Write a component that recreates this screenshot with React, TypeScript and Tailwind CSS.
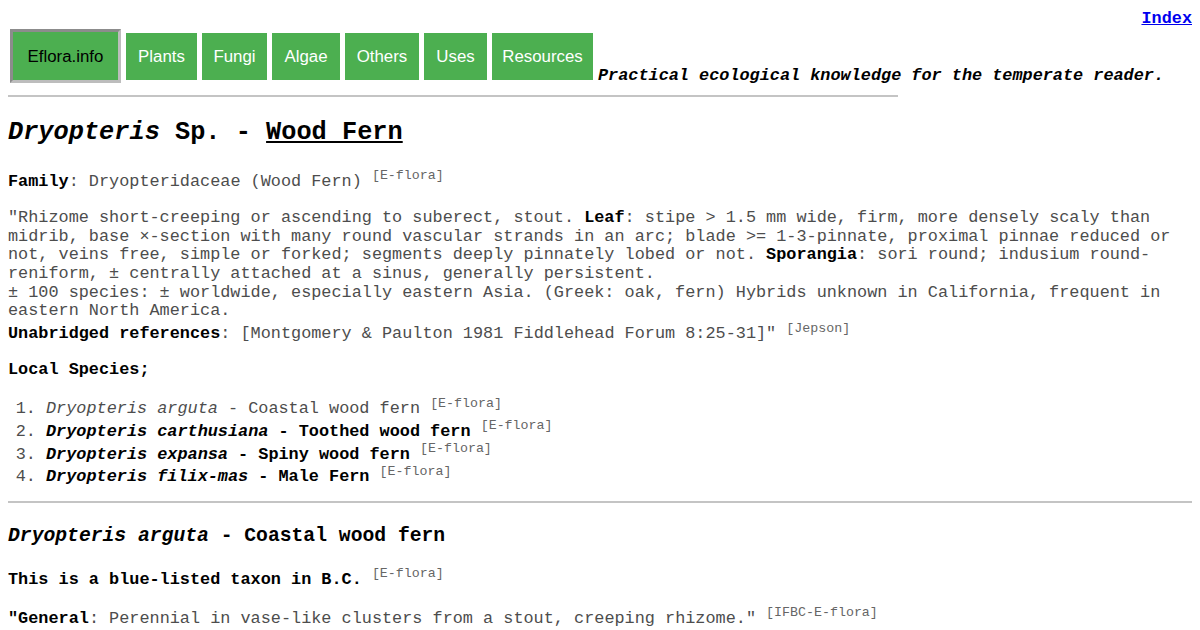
import React from "react";

const Sup = ({ children }: { children: React.ReactNode }) => (
  <sup className="text-[13.3px] font-normal not-italic text-[#666]">{children}</sup>
);

export default function App() {
  const navs: [string, string][] = [
    ["Plants", "w-[71px]"],
    ["Fungi", "w-[65px]"],
    ["Algae", "w-[68px]"],
    ["Others", "w-[74px]"],
    ["Uses", "w-[63px]"],
    ["Resources", "w-[101px]"],
  ];
  return (
    <div className="min-h-[630px] bg-white px-[8px] pb-[8px] pt-[10px] font-['Liberation_Mono','Courier_New',monospace] text-[16.85px] leading-[18.7px] text-[#4d4d4d]">
      <div className="text-right">
        <a href="#" className="font-bold text-[#0000ee] underline">Index</a>
      </div>

      <div className="flex h-[54px] items-start">
        <div className="ml-[2px] flex h-[54px] w-[111px] items-center justify-center border-[3px] border-[#8c8c8c] border-b-[#bdbdbd] border-r-[#bdbdbd] bg-[#4caf50] pt-[3px] font-['Liberation_Sans',Arial,sans-serif] text-[16.85px] text-black">
          Eflora.info
        </div>
        {navs.map(([n, w]) => (
          <div
            key={n}
            className={`ml-[5px] mt-[4px] flex h-[47px] ${w} items-center justify-center bg-[#4caf50] pt-[2px] font-['Liberation_Sans',Arial,sans-serif] text-[16.85px] text-white`}
          >
            {n}
          </div>
        ))}
        <div className="ml-[5px] mt-[38px] whitespace-nowrap font-bold italic text-black">
          Practical ecological knowledge for the temperate reader.
        </div>
      </div>

      <div className="mt-[12px] h-[2px] w-[890px] bg-[#c4c4c4]" />

      <h2 className="mt-[21px] text-[25.3px] font-bold leading-[29px] text-black">
        <i>Dryopteris</i> Sp. - <span className="underline">Wood Fern</span>
      </h2>

      <div className="mt-[22px] pt-[4px]">
        <b className="text-black">Family</b>: Dryopteridaceae (Wood Fern) <Sup>[E-flora]</Sup>
      </div>

      <div className="mt-[17.5px]">
        "Rhizome short-creeping or ascending to suberect, stout. <b className="text-black">Leaf</b>: stipe &gt; 1.5 mm wide, firm, more densely scaly than midrib, base ×-section with many round vascular strands in an arc; blade &gt;= 1-3-pinnate, proximal pinnae reduced or not, veins free, simple or forked; segments deeply pinnately lobed or not. <b className="text-black">Sporangia</b>: sori round; indusium round-reniform, ± centrally attached at a sinus, generally persistent.
        <br />± 100 species: ± worldwide, especially eastern Asia. (Greek: oak, fern) Hybrids unknown in California, frequent in eastern North America.
      </div>
      <div className="pt-[4.2px]">
        <b className="text-black">Unabridged references</b>: [Montgomery &amp; Paulton 1981 Fiddlehead Forum 8:25-31]" <Sup>[Jepson]</Sup>
      </div>

      <div className="mt-[17px] font-bold text-black">Local Species;</div>

      <ol className="mt-[16.6px]">
        <li className="pt-[4px]">
          <span className="ml-[7.7px] whitespace-pre">1. </span>
          <i>Dryopteris arguta</i> - Coastal wood fern <Sup>[E-flora]</Sup>
        </li>
        <li className="pt-[4px]">
          <span className="ml-[7.7px] whitespace-pre">2. </span>
          <b className="text-black"><i>Dryopteris carthusiana</i> - Toothed wood fern</b> <Sup>[E-flora]</Sup>
        </li>
        <li className="pt-[4px]">
          <span className="ml-[7.7px] whitespace-pre">3. </span>
          <b className="text-black"><i>Dryopteris expansa</i> - Spiny wood fern</b> <Sup>[E-flora]</Sup>
        </li>
        <li className="pt-[4px]">
          <span className="ml-[7.7px] whitespace-pre">4. </span>
          <b className="text-black"><i>Dryopteris filix-mas</i> - Male Fern</b> <Sup>[E-flora]</Sup>
        </li>
      </ol>

      <div className="mt-[14.3px] h-[2px] w-full bg-[#c4c4c4]" />

      <h3 className="mt-[21.6px] text-[19.7px] font-bold leading-[22.3px] text-black">
        <i>Dryopteris arguta</i> - Coastal wood fern
      </h3>

      <div className="mt-[19.4px] pt-[4px]">
        <b className="text-black">This is a blue-listed taxon in B.C.</b> <Sup>[E-flora]</Sup>
      </div>

      <div className="mt-[16.4px] pt-[4px]">
        <b className="text-black">"General</b>: Perennial in vase-like clusters from a stout, creeping rhizome." <Sup>[IFBC-E-flora]</Sup>
      </div>
    </div>
  );
}
